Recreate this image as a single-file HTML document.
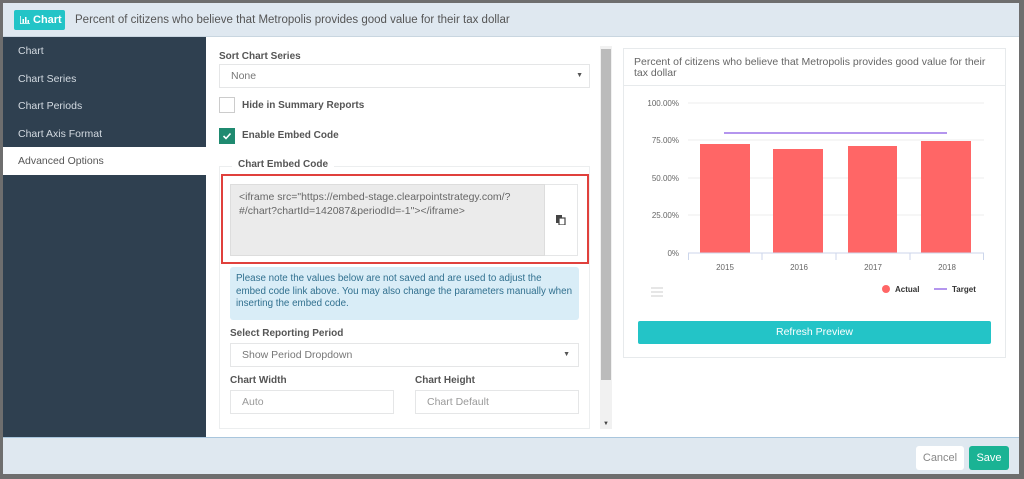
<!DOCTYPE html>
<html><head><style>
*{box-sizing:border-box;margin:0;padding:0}
body{width:1024px;height:479px;background:#6e6e6e;font-family:"Liberation Sans",sans-serif;position:relative;overflow:hidden;font-size:11px;color:#555}
.modal{position:absolute;left:3px;top:3px;width:1016px;height:471px;background:#fff;}
.hdr{position:absolute;left:0;top:0;width:1016px;height:34px;background:#dfe8f0;border-bottom:1px solid #c9d6e0}
.badge{position:absolute;left:11px;top:7px;width:51px;height:20px;background:#23c4c7;border-radius:2px;color:#fff;font-weight:bold;font-size:11px;line-height:20px;padding-left:19px}
.htitle{position:absolute;left:72px;top:11px;font-size:11.5px;color:#555}
.side{position:absolute;left:0;top:34px;width:203px;height:400px;background:#2f4050}
.side div{height:27.5px;line-height:29px;padding-left:15px;color:#d4dbe2;font-size:10.5px}
.side .act{background:#fff;color:#555}
.ftr{position:absolute;left:0;top:434px;width:1016px;height:37px;background:#dfe8f0;border-top:1px solid #a9c6dd}
.lbl{position:absolute;font-weight:bold;font-size:10px;color:#555}
.inp{position:absolute;border:1px solid #e5e6e7;background:#fff;font-size:10.5px;color:#777;padding-left:11px;line-height:22px}
</style></head><body>
<div class="modal">
<div class="hdr"><div class="badge"><svg style="position:absolute;left:6px;top:6px" width="10" height="8"><path d="M0 0V8H10" stroke="#fff" stroke-width="1.5" fill="none"/><rect x="2.5" y="3" width="1.5" height="4" fill="#fff"/><rect x="5" y="1" width="1.5" height="6" fill="#fff"/><rect x="7.5" y="4" width="1.5" height="3" fill="#fff"/></svg>Chart</div><div class="htitle">Percent of citizens who believe that Metropolis provides good value for their tax dollar</div></div>
<div class="side"><div>Chart</div><div>Chart Series</div><div>Chart Periods</div><div>Chart Axis Format</div><div class="act">Advanced Options</div></div>
<div class="lbl" style="left:216px;top:48px">Sort Chart Series</div>
<div class="inp" style="left:216px;top:61px;width:371px;height:24px">None<span style="position:absolute;right:6px;font-size:7px;color:#555">▼</span></div>
<div style="position:absolute;left:216px;top:94px;width:16px;height:16px;border:1px solid #ccc"></div>
<div class="lbl" style="left:239px;top:97px">Hide in Summary Reports</div>
<div style="position:absolute;left:216px;top:125px;width:16px;height:16px;background:#1f8a70"><svg width="16" height="16"><path d="M4.5 8L7 10.5L11.5 5.5" stroke="#fff" stroke-width="1.6" fill="none"/></svg></div>
<div class="lbl" style="left:239px;top:127px">Enable Embed Code</div>
<div style="position:absolute;left:216px;top:163px;width:371px;height:263px;border:1px solid #eceeef"></div>
<div class="lbl" style="left:229px;top:156px;background:#fff;padding:0 6px">Chart Embed Code</div>
<div style="position:absolute;left:218px;top:171px;width:368px;height:90px;border:2px solid #e0403c"></div>
<div style="position:absolute;left:227px;top:181px;width:315px;height:72px;background:#ebebeb;border:1px solid #ddd;font-size:10.5px;color:#666;padding:5px 8px;line-height:14px">&lt;iframe src="https://embed-stage.clearpointstrategy.com/?<br>#/chart?chartId=142087&amp;periodId=-1"&gt;&lt;/iframe&gt;</div>
<div style="position:absolute;left:542px;top:181px;width:33px;height:72px;border:1px solid #e5e6e7;border-left:none"><svg style="position:absolute;left:11px;top:30px" width="10" height="10"><rect x="0" y="0" width="6" height="8" fill="#444"/><rect x="3" y="3" width="6" height="7" fill="#fff" stroke="#444" stroke-width="1.2"/></svg></div>
<div style="position:absolute;left:227px;top:264px;width:349px;height:53px;background:#d9edf7;border-radius:3px;color:#31708f;font-size:9.8px;line-height:12.7px;padding:6px 6px">Please note the values below are not saved and are used to adjust the embed code link above. You may also change the parameters manually when inserting the embed code.</div>
<div class="lbl" style="left:227px;top:325px">Select Reporting Period</div>
<div class="inp" style="left:227px;top:340px;width:349px;height:24px">Show Period Dropdown<span style="position:absolute;right:8px;font-size:7px;color:#555">▼</span></div>
<div class="lbl" style="left:227px;top:372px">Chart Width</div>
<div class="lbl" style="left:412px;top:372px">Chart Height</div>
<div class="inp" style="left:227px;top:387px;width:164px;height:24px;color:#999">Auto</div>
<div class="inp" style="left:412px;top:387px;width:164px;height:24px;color:#999">Chart Default</div>
<div style="position:absolute;left:597px;top:43px;width:12px;height:383px;background:#f1f1f1"><div style="margin:3px 1px;width:10px;height:331px;background:#bbb"></div><div style="position:absolute;bottom:2px;left:3px;font-size:6px;color:#444">▼</div></div>
<div style="position:absolute;left:620px;top:45px;width:383px;height:310px;border:1px solid #e7eaec">
<div style="height:37px;border-bottom:1px solid #e7eaec;padding:8px 10px;font-size:10.5px;line-height:11px;color:#666">Percent of citizens who believe that Metropolis provides good value for their tax dollar</div>
<div style="position:absolute;left:14px;top:272px;width:353px;height:23px;background:#23c4c7;border-radius:2px;color:#fff;text-align:center;line-height:23px;font-size:10.5px">Refresh Preview</div>
</div>
<svg style="position:absolute;left:607px;top:85px" width="400" height="210" font-family="Liberation Sans" font-size="8" fill="#666">
<g stroke="#eee"><line x1="78" y1="15" x2="374" y2="15"/><line x1="78" y1="52" x2="374" y2="52"/><line x1="78" y1="90" x2="374" y2="90"/><line x1="78" y1="127" x2="374" y2="127"/></g>
<g text-anchor="end"><text x="69" y="18">100.00%</text><text x="69" y="55">75.00%</text><text x="69" y="93">50.00%</text><text x="69" y="130">25.00%</text><text x="69" y="168">0%</text></g>
<g fill="#ff6666"><rect x="90" y="56" width="50" height="109"/><rect x="163" y="61" width="50" height="104"/><rect x="238" y="58" width="49" height="107"/><rect x="311" y="53" width="50" height="112"/></g>
<line x1="114" y1="45" x2="337" y2="45" stroke="#9b72e8" stroke-width="1.5"/>
<g stroke="#ccd6eb"><line x1="78" y1="165" x2="374" y2="165"/><line x1="78.5" y1="165" x2="78.5" y2="172"/><line x1="152" y1="165" x2="152" y2="172"/><line x1="226" y1="165" x2="226" y2="172"/><line x1="300" y1="165" x2="300" y2="172"/><line x1="373.5" y1="165" x2="373.5" y2="172"/></g>
<g text-anchor="middle"><text x="115" y="182">2015</text><text x="189" y="182">2016</text><text x="263" y="182">2017</text><text x="337" y="182">2018</text></g>
<g stroke="#ddd" stroke-width="1.5"><line x1="41" y1="200" x2="53" y2="200"/><line x1="41" y1="204" x2="53" y2="204"/><line x1="41" y1="208" x2="53" y2="208"/></g>
<circle cx="276" cy="201" r="4" fill="#ff6666"/><text x="285" y="204" font-weight="bold" fill="#333">Actual</text>
<line x1="324" y1="201" x2="337" y2="201" stroke="#9b72e8" stroke-width="1.5"/><text x="342" y="204" font-weight="bold" fill="#333">Target</text>
</svg>
<div class="ftr"><div style="position:absolute;left:913px;top:8px;width:48px;height:24px;background:#fff;border-radius:3px;color:#888;text-align:center;line-height:24px;font-size:11px">Cancel</div><div style="position:absolute;left:966px;top:8px;width:40px;height:24px;background:#1ab394;border-radius:3px;color:#fff;text-align:center;line-height:24px;font-size:11px">Save</div></div>
</div>
</body></html>
